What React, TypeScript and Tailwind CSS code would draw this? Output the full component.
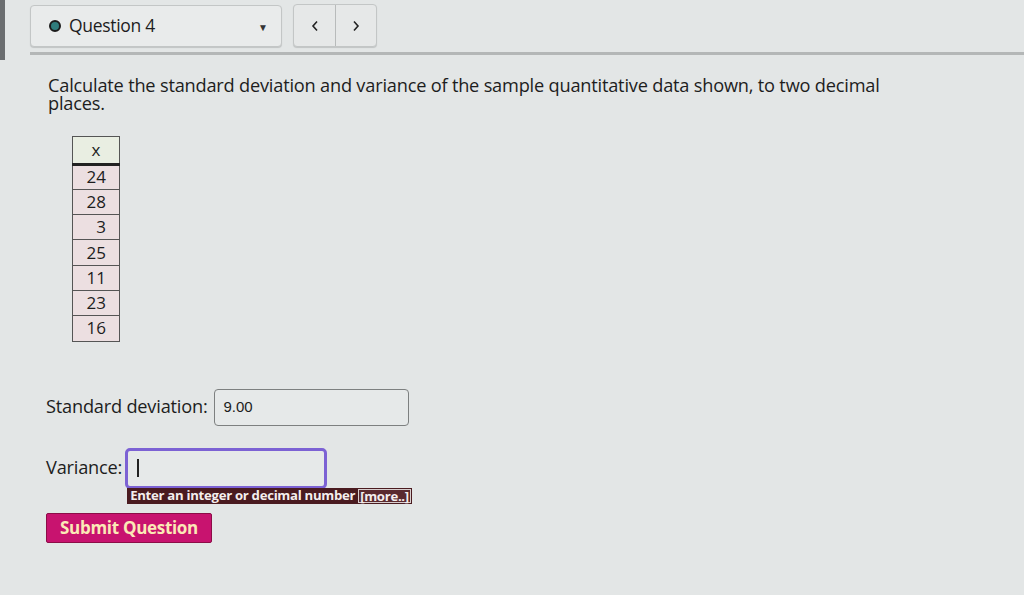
import React from "react";

const values = [24, 28, 3, 25, 11, 23, 16];

export default function App() {
  return (
    <div
      className="relative h-[595px] w-[1024px] overflow-hidden bg-[#e3e6e6] text-[#1d1d1d]"
      style={{ fontFamily: "'Open Sans', Lato, sans-serif" }}
    >
      {/* screen bezel edge */}
      <div className="absolute left-0 top-0 h-[60px] w-[5px] bg-[#6b6e70]" />

      {/* top nav */}
      <div className="ml-[30px] border-b-[3px] border-[#b4b7b7] pb-[5px] pt-[4px]">
        <div className="flex items-center gap-[11px]">
          <div className="flex h-[42px] w-[252px] items-center rounded-[4px] border border-[#c3c6c6] bg-[#e9ebeb] pl-[18px] pr-[13px] shadow-[0_1px_1px_rgba(0,0,0,0.15)]">
            <span className="h-[12px] w-[12px] rounded-full border-[2px] border-[#1b1b1b] bg-[#2f7c7c]" />
            <span className="ml-[8px] text-[17.5px] tracking-[-0.3px]">Question 4</span>
            <span className="ml-auto mt-[4px] text-[10px] text-[#333]">▼</span>
          </div>
          <div className="flex h-[43px] w-[84px] rounded-[4px] border border-[#c3c6c6] bg-[#e6e8e8] shadow-[0_1px_1px_rgba(0,0,0,0.15)]">
            <div className="flex w-[42px] items-center justify-center border-r border-[#b8bbbb]">
              <svg width="8" height="12" viewBox="0 0 8 12" fill="none" stroke="#222" strokeWidth="1.6">
                <path d="M6 1.5 L2 6 L6 10.5" />
              </svg>
            </div>
            <div className="flex flex-1 items-center justify-center">
              <svg width="8" height="12" viewBox="0 0 8 12" fill="none" stroke="#222" strokeWidth="1.6">
                <path d="M2 1.5 L6 6 L2 10.5" />
              </svg>
            </div>
          </div>
        </div>
      </div>

      {/* question */}
      <div className="pl-[48px] pt-[21px]">
        <p className="w-[845px] text-[18.2px] leading-[18px] tracking-[-0.2px]">
          Calculate the standard deviation and variance of the sample quantitative data shown, to two decimal
          places.
        </p>

        <table className="ml-[24px] mt-[24px] border-collapse text-[17px]">
          <thead>
            <tr>
              <th className="h-[26px] w-[47px] border border-b-[3px] border-[#555] border-b-[#222] bg-[#e9eee2] font-normal">
                x
              </th>
            </tr>
          </thead>
          <tbody>
            {values.map((v) => (
              <tr key={v}>
                <td className="h-[25.3px] border border-[#555] bg-[#ecdfe1] pr-[13px] text-right leading-[20px]">
                  {v}
                </td>
              </tr>
            ))}
          </tbody>
        </table>
      </div>

      {/* answers */}
      <div className="pl-[46px] pt-[47px]">
        <div className="flex items-center gap-[6px]">
          <span className="text-[18.2px] tracking-[-0.2px]">Standard deviation:</span>
          <div className="flex h-[37px] w-[195px] items-center rounded-[4px] border border-[#7d8080] bg-[#e6e9e9] px-[9px]">
            <span className="text-[15px]" style={{ fontFamily: "'Liberation Sans', Arial, sans-serif" }}>
              9.00
            </span>
          </div>
        </div>

        <div className="mt-[22px] flex items-center gap-[3px]">
          <span className="text-[18.2px] tracking-[-0.2px]">Variance:</span>
          <div className="relative">
            <div className="flex h-[41px] w-[202px] items-center rounded-[5px] border-[3px] border-[#7c62d4] bg-[#e6e9e9] px-[9px]">
              <span className="h-[18px] w-[2px] bg-[#222]" />
            </div>
            <div className="absolute left-[2px] top-[40px] flex h-[16px] items-center whitespace-nowrap bg-[#4a1b20] pl-[3px] pr-[1px] text-[13.2px] font-bold leading-none tracking-[-0.3px] text-[#f4eeee]">
              Enter an integer or decimal number
              <span className="ml-[3px] border border-[#d9cfcf] bg-[#5a2a2f] px-[1px] leading-[12px]">[more..]</span>
            </div>
          </div>
        </div>

        <button className="mt-[24px] flex h-[30px] w-[166px] items-center justify-center rounded-[2px] border border-[#8c0d47] bg-[#c8136f] text-[17px] font-bold tracking-[-0.3px] text-[#fbe9b6]">
          Submit Question
        </button>
      </div>
    </div>
  );
}
